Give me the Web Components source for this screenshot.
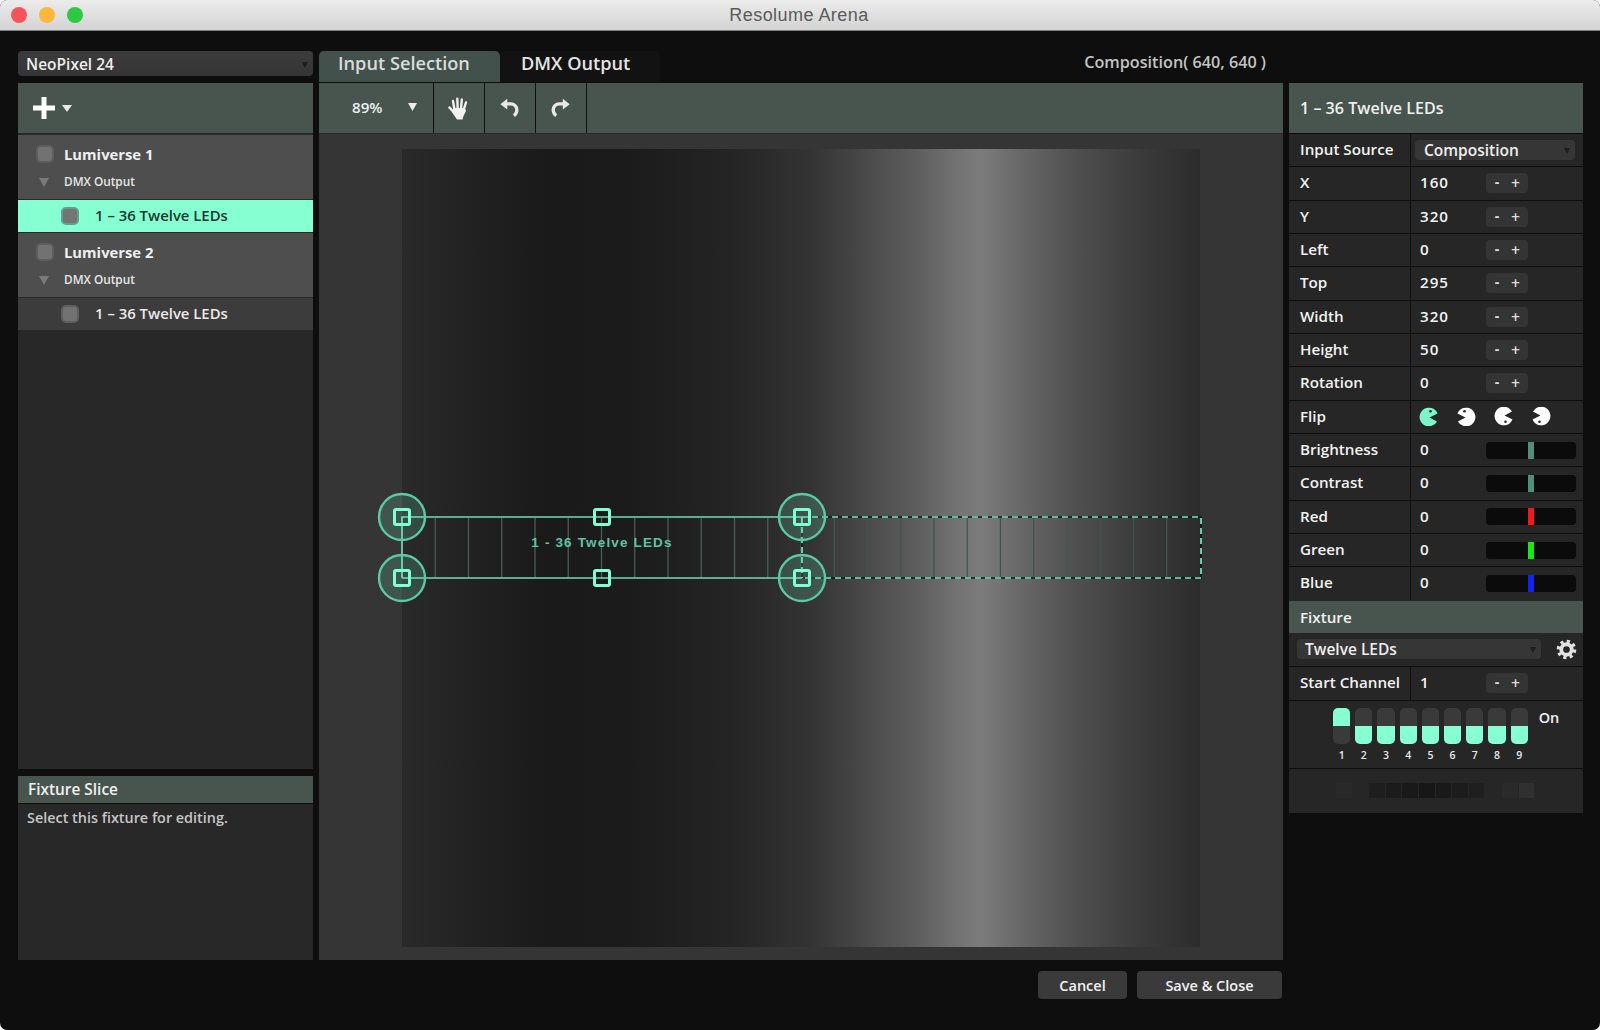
<!DOCTYPE html>
<html>
<head>
<meta charset="utf-8">
<title>Resolume Arena</title>
<style>
    html, body { margin: 0; padding: 0; background: #fff; }
    body { font-family: "Open Sans", "DejaVu Sans", sans-serif; color: #eee; }
</style>
</head>
<body>
<mac-window caption="Resolume Arena">
    <mapper-layout>
        <combo-box slot="top-left" size="big">NeoPixel 24</combo-box>
        <tab-strip slot="top-center" info="Composition( 640, 640 )"></tab-strip>

        <patch-panel slot="left">
            <tree-group name="Lumiverse 1"></tree-group>
            <tree-slice selected>1 – 36 Twelve LEDs</tree-slice>
            <tree-group name="Lumiverse 2"></tree-group>
            <tree-slice>1 – 36 Twelve LEDs</tree-slice>
            <span slot="info-title">Fixture Slice</span>
            <span slot="info-text">Select this fixture for editing.</span>
        </patch-panel>

        <stage-panel slot="center" zoom="89%"></stage-panel>

        <props-panel slot="right" heading="1 – 36 Twelve LEDs">
            <prop-row label="Input Source"><combo-box slot="wide">Composition</combo-box></prop-row>
            <prop-row label="X" value="160"><step-buttons></step-buttons></prop-row>
            <prop-row label="Y" value="320"><step-buttons></step-buttons></prop-row>
            <prop-row label="Left" value="0"><step-buttons></step-buttons></prop-row>
            <prop-row label="Top" value="295"><step-buttons></step-buttons></prop-row>
            <prop-row label="Width" value="320"><step-buttons></step-buttons></prop-row>
            <prop-row label="Height" value="50"><step-buttons></step-buttons></prop-row>
            <prop-row label="Rotation" value="0"><step-buttons></step-buttons></prop-row>
            <prop-row label="Flip"><flip-icons slot="wide"></flip-icons></prop-row>
            <prop-row label="Brightness" value="0"><level-slider color="#4f8f7a"></level-slider></prop-row>
            <prop-row label="Contrast" value="0"><level-slider color="#4f8f7a"></level-slider></prop-row>
            <prop-row label="Red" value="0"><level-slider color="#f01818"></level-slider></prop-row>
            <prop-row label="Green" value="0"><level-slider color="#18e818"></level-slider></prop-row>
            <prop-row label="Blue" value="0"><level-slider color="#1024f0"></level-slider></prop-row>
            <fixture-box slot="fixture"></fixture-box>
        </props-panel>

        <action-button slot="footer" style="width:89px">Cancel</action-button>
        <action-button slot="footer" style="width:145px">Save &amp; Close</action-button>
    </mapper-layout>
</mac-window>

<script>
const FONT = '"Open Sans", "DejaVu Sans", sans-serif';

function shadowFrom(el, html) {
    el.attachShadow({mode: 'open'}).innerHTML = html;
    return el.shadowRoot;
}

class MacWindow extends HTMLElement {
    constructor() {
        super();
        shadowFrom(this, `
<style>
    :host { display: flex; flex-direction: column; width: 1600px; height: 1030px; background: #0e0e0e; border-radius: 7px; overflow: hidden; }
    .bar { flex: none; height: 31px; box-sizing: border-box; position: relative; display: flex; align-items: center; justify-content: center;
        background: linear-gradient(#ececec, #d3d3d3); border-bottom: 1px solid #808080; }
    .lights { position: absolute; left: 11px; top: 7px; display: flex; gap: 12px; }
    .lights i { width: 16px; height: 16px; border-radius: 50%; }
    .caption { font: 18px "Liberation Sans", sans-serif; color: #5a5a5a; letter-spacing: .45px; margin-left: -2px; }
</style>
<div class="bar">
    <div class="lights">
        <i style="background:#f5555a"></i><i style="background:#fdb83a"></i><i style="background:#2ec942"></i>
    </div>
    <div class="caption"></div>
</div>
<slot></slot>`);
    }
    connectedCallback() {
        this.shadowRoot.querySelector('.caption').textContent = this.getAttribute('caption');
    }
}
customElements.define('mac-window', MacWindow);

class MapperLayout extends HTMLElement {
    constructor() {
        super();
        shadowFrom(this, `
<style>
    :host { display: grid; grid-template-columns: 295px 964px 294px; grid-template-rows: 32px 877px auto; column-gap: 6px;
        padding: 20px 0 0 18px; }
    .tl { grid-area: 1 / 1; } .tc { grid-area: 1 / 2; }
    .left { grid-area: 2 / 1; } .center { grid-area: 2 / 2; } .right { grid-area: 2 / 3; }
    .footer { grid-area: 3 / 2; display: flex; justify-content: flex-end; gap: 10px; padding: 11px 1px 0 0; }
</style>
<div class="tl"><slot name="top-left"></slot></div>
<div class="tc"><slot name="top-center"></slot></div>
<div class="left"><slot name="left"></slot></div>
<div class="center"><slot name="center"></slot></div>
<div class="right"><slot name="right"></slot></div>
<div class="footer"><slot name="footer"></slot></div>`);
    }
}
customElements.define('mapper-layout', MapperLayout);

class ComboBox extends HTMLElement {
    constructor() {
        super();
        shadowFrom(this, `
<style>
    :host { display: flex; align-items: center; box-sizing: border-box; height: 20px; padding: 0 5px 0 9px; border-radius: 4px; background: #363636;
        font: 600 15.5px ${FONT}; color: #eee; }
    :host([size="big"]) { height: 25px; padding-left: 8px; background: linear-gradient(#3c3c3c, #353535); }
    span { flex: 1; }
    i { width: 0; height: 0; border: 3.5px solid transparent; border-top: 6px solid #1e1e1e; border-bottom: 0; margin-top: 2px; }
</style>
<span><slot></slot></span><i></i>`);
    }
}
customElements.define('combo-box', ComboBox);

class TabStrip extends HTMLElement {
    constructor() {
        super();
        shadowFrom(this, `
<style>
    :host { display: flex; height: 31px; font: 600 18.2px ${FONT}; }
    .tab { box-sizing: border-box; height: 31px; padding: 0 0 8px 19px; display: flex; align-items: center; border-radius: 5px 5px 0 0; color: #e4e4e4; }
    .on { width: 181px; background: #43514c; color: #d8dcda; }
    .off { width: 160px; padding-left: 21px; background: #121212; }
    .info { margin-left: auto; margin-right: 17px; padding-bottom: 9px; align-self: center; font-size: 16.2px; color: #c4c4c4; }
</style>
<div class="tab on">Input Selection</div>
<div class="tab off">DMX Output</div>
<div class="info"></div>`);
    }
    connectedCallback() {
        this.shadowRoot.querySelector('.info').textContent = this.getAttribute('info');
    }
}
customElements.define('tab-strip', TabStrip);

class PatchPanel extends HTMLElement {
    constructor() {
        super();
        shadowFrom(this, `
<style>
    :host { display: flex; flex-direction: column; height: 877px; }
    .head { flex: none; height: 50px; display: flex; align-items: center; gap: 6px; padding-left: 14px; background: #48554f; }
    .list { flex: 1; background: #282828; }
    .info { flex: none; height: 184px; margin-top: 7px; background: #282828; }
    .title { height: 27px; padding-left: 10px; margin-bottom: 1px; background: #48554f; border-bottom: 1px solid #0e0e0e; font: 600 15.4px/27px ${FONT}; color: #f0f0f0; }
    .text { padding: 3px 9px; font: 600 14.4px ${FONT}; color: #c6c6c6; }
</style>
<div class="head">
    <svg width="24" height="24" viewBox="0 0 24 24"><path d="M9.5 1h5v8.5H23v5h-8.5V23h-5v-8.5H1v-5h8.500z" fill="#fff"/></svg>
    <svg width="10" height="7" viewBox="0 0 10 7"><path d="M0 0h10L5 7z" fill="#e8e8e8"/></svg>
</div>
<div class="list"><slot></slot></div>
<div class="info">
    <div class="title"><slot name="info-title"></slot></div>
    <div class="text"><slot name="info-text"></slot></div>
</div>`);
    }
}
customElements.define('patch-panel', PatchPanel);

const checkBox = `<i class="check"></i>`;
const checkStyle = `.check { flex: none; display: block; box-sizing: border-box; width: 18px; height: 18px; border-radius: 5px; background: #727272; border: 2px solid #5e5e5e; }`;

class TreeGroup extends HTMLElement {
    constructor() {
        super();
        shadowFrom(this, `
<style>
    :host { display: block; height: 64px; margin: 1px 0; background: #4e4e4e; }
    :host(:first-child) { margin-top: 2px; }
    .row { display: flex; align-items: center; height: 36px; padding: 1px 0 0 18px; box-sizing: border-box; gap: 10px; font: 700 14.8px ${FONT}; color: #f0f0f0; }
    .sub { display: flex; align-items: center; height: 16px; margin-top: 2px; padding-left: 21px; gap: 15px; font: 600 11.8px ${FONT}; color: #e6e6e6; }
    .sub i { width: 0; height: 0; border: 5.5px solid transparent; border-top: 9px solid #7a7a7a; border-bottom: 0; margin-top: 3px; }
    ${checkStyle}
</style>
<div class="row">${checkBox}<span></span></div>
<div class="sub"><i></i><span>DMX Output</span></div>`);
    }
    connectedCallback() {
        this.shadowRoot.querySelector('.row span').textContent = this.getAttribute('name');
    }
}
customElements.define('tree-group', TreeGroup);

class TreeSlice extends HTMLElement {
    constructor() {
        super();
        shadowFrom(this, `
<style>
    :host { display: flex; align-items: center; height: 32px; gap: 16px; padding-left: 43px; background: #3c3c3c; font: 600 14.9px ${FONT}; color: #eaeaea; }
    :host([selected]) { background: #86ffd2; color: #16382c; }
    :host([selected]) .check { background: #747474; border-color: #64a08e; }
    span { padding-bottom: 2px; }
    ${checkStyle}
</style>
${checkBox}<span><slot></slot></span>`);
    }
}
customElements.define('tree-slice', TreeSlice);

class StagePanel extends HTMLElement {
    constructor() {
        super();
        shadowFrom(this, `
<style>
    :host { display: flex; flex-direction: column; height: 877px; background: #353535; }
    .tools { flex: none; height: 50px; display: flex; background: #48554f; border-bottom: 1px solid #2a2a2a; }
    .cell { width: 51.3px; box-sizing: border-box; display: flex; align-items: center; justify-content: center; border-right: 1.3px solid #101010; }
    .zoom { width: 114.5px; justify-content: flex-start; padding: 0 0 2px 33px; gap: 25px; font: 600 15.2px ${FONT}; color: #eee; }
    .view { flex: 1; padding-top: 1px; display: flex; align-items: center; justify-content: center; }
</style>
<div class="tools">
    <div class="cell zoom"><span id="zoom"></span><svg width="9" height="8" viewBox="0 0 9 8"><path d="M0 0h9L4.500 8z" fill="#eee"/></svg></div>
    <div class="cell"><svg width="24" height="24" viewBox="0 0 24 24"><g stroke="#f2f2f2" stroke-linecap="round" fill="none">
        <path d="M2.500 11.500L7 16.500" stroke-width="2.500"/>
        <path d="M7.500 14L6 5" stroke-width="2.400"/>
        <path d="M10.700 13L10.300 2.800" stroke-width="2.400"/>
        <path d="M14 13L14.800 3.500" stroke-width="2.400"/>
        <path d="M16.600 14L19 6.500" stroke-width="2.400"/>
    </g><path d="M6.500 12h11.500l1 3-2.500 5-1 3.500H10L5.500 17z" fill="#f2f2f2"/></svg></div>
    <div class="cell"><svg width="22" height="22" viewBox="0 0 24 24"><path d="M8 7.500h5a6.500 6.500 0 0 1 6.500 6.500c0 3-1.200 5-3.200 6.500" fill="none" stroke="#e8e8e8" stroke-width="3.600"/><path d="M1.500 8l7.500-6v11.500z" fill="#e8e8e8"/></svg></div>
    <div class="cell"><svg width="22" height="22" viewBox="0 0 24 24"><g transform="translate(23 0) scale(-1 1)"><path d="M8 7.500h5a6.500 6.500 0 0 1 6.500 6.500c0 3-1.200 5-3.200 6.500" fill="none" stroke="#e8e8e8" stroke-width="3.600"/><path d="M1.500 8l7.500-6v11.500z" fill="#e8e8e8"/></g></svg></div>
</div>
<div class="view"><led-stage></led-stage></div>`);
    }
    connectedCallback() {
        this.shadowRoot.getElementById('zoom').textContent = this.getAttribute('zoom');
    }
}
customElements.define('stage-panel', StagePanel);

// composition preview, the fixture slice sits on it as a free canvas
class LedStage extends HTMLElement {
    constructor() {
        super();
        let lines = '';
        for (let i = 1; i < 24; i++) {
            let x = i * 33.25;
            lines += `<line x1="${x}" x2="${x}" y1="1" y2="61" stroke="${i < 12 ? '#4c5c56' : '#44534e'}" stroke-width="1.300"/>`;
        }
        let handles = '';
        for (let [x, y] of [[0, 0], [0, 61], [400, 0], [400, 61]]) {
            handles += `<circle cx="${x}" cy="${y}" r="23" fill="rgba(110,240,195,.18)" stroke="#5cc9a4" stroke-width="2.400"/>`;
        }
        for (let [x, y] of [[0, 0], [0, 61], [200, 0], [200, 61], [400, 0], [400, 61]]) {
            handles += `<rect x="${x - 7.500}" y="${y - 7.500}" width="15" height="15" rx="1.500" fill="none" stroke="#80ffd3" stroke-width="3"/>`;
        }
        shadowFrom(this, `
<style>
    :host { display: block; position: relative; width: 798px; height: 798px;
        background: linear-gradient(90deg, #2a2a2a 0, #222 8%, #1a1a1a 18%, #1b1b1b 28%, #242424 41%, #333 51%, #444 56.5%, #5c5c5c 64%, #727272 69.5%, #7c7c7c 72.5%, #6a6a6a 77%, #4f4f4f 84.5%, #3c3c3c 92%, #2c2c2c 100%); }
    svg { position: absolute; left: 0; top: 368.5px; overflow: visible; }
    text { font: 700 13.500px "Liberation Sans", sans-serif; letter-spacing: 1.15px; fill: #5cc4a2; }
</style>
<svg width="798" height="62" viewBox="0 0 798 62">
    ${lines}
    <g fill="none" stroke-width="1.700">
        <path d="M400 0H799V61H400M400 0V61" stroke="#141414"/>
        <path d="M400 0H799V61H400M400 0V61" stroke="#72eec5" stroke-dasharray="6 4"/>
        <path d="M0 61V0H400M0 61H400" stroke="#6fdcb8"/>
    </g>
    ${handles}
    <text x="200" y="30" text-anchor="middle">1 - 36 Twelve LEDs</text>
</svg>`);
    }
}
customElements.define('led-stage', LedStage);

class PropsPanel extends HTMLElement {
    constructor() {
        super();
        shadowFrom(this, `
<style>
    :host { display: block; background: #262626; }
    .head { height: 50px; padding-left: 11px; background: #48554f; font: 600 16.1px/50px ${FONT}; color: #f0f0f0; }
</style>
<div class="head"></div>
<slot></slot>
<slot name="fixture"></slot>`);
    }
    connectedCallback() {
        this.shadowRoot.querySelector('.head').textContent = this.getAttribute('heading');
    }
}
customElements.define('props-panel', PropsPanel);

class PropRow extends HTMLElement {
    constructor() {
        super();
        shadowFrom(this, `
<style>
    :host { display: flex; box-sizing: border-box; height: 33.330px; border-top: 1px solid #0e0e0e; background: #262626; font: 600 15.2px ${FONT}; color: #f2f2f2; }
    .label { flex: none; width: 122px; box-sizing: border-box; padding: 0 0 2px 11px; border-right: 1px solid #0e0e0e; display: flex; align-items: center; }
    .value { flex: none; width: 75px; padding: 0 0 2px 9px; box-sizing: border-box; display: flex; align-items: center; letter-spacing: 1px; }
    .rest { display: flex; align-items: center; }
    .wide { flex: 1; display: flex; align-items: center; padding: 0 8px 0 4px; }
    ::slotted([slot="wide"]) { flex: 1; }
</style>
<div class="label"></div>
<div class="value"></div>
<div class="rest"><slot></slot></div>
<div class="wide"><slot name="wide"></slot></div>`);
    }
    connectedCallback() {
        this.shadowRoot.querySelector('.label').textContent = this.getAttribute('label');
        let value = this.shadowRoot.querySelector('.value');
        if (this.hasAttribute('value')) value.textContent = this.getAttribute('value');
        else value.remove();
    }
}
customElements.define('prop-row', PropRow);

class StepButtons extends HTMLElement {
    constructor() {
        super();
        shadowFrom(this, `
<style>
    :host { display: flex; justify-content: center; align-items: center; gap: 11px; box-sizing: border-box; padding-left: 1px; width: 42px; height: 20px; border-radius: 4px; background: #343434; font: 700 12px "DejaVu Sans", sans-serif; color: #ddd; }
</style>
<span>-</span><span>+</span>`);
    }
}
customElements.define('step-buttons', StepButtons);

class LevelSlider extends HTMLElement {
    constructor() {
        super();
        shadowFrom(this, `
<style>
    :host { display: flex; justify-content: center; width: 90px; height: 17px; border-radius: 4px; background: #0b0b0b; }
    i { width: 6px; height: 100%; }
</style>
<i></i>`);
    }
    connectedCallback() {
        this.shadowRoot.querySelector('i').style.background = this.getAttribute('color');
    }
}
customElements.define('level-slider', LevelSlider);

class FlipIcons extends HTMLElement {
    constructor() {
        super();
        const pac = (fill, eye, t) => `<svg width="19" height="19" viewBox="0 0 19 19"><g transform="${t}"><path d="M18.500 6.500L10.500 10.500l7.500 4A9.300 9.300 0 1 1 18.500 6.500z" fill="${fill}"/><circle cx="11.500" cy="4.300" r="1.300" fill="${eye}"/></g></svg>`;
        shadowFrom(this, `
<style>
    :host { display: flex; gap: 18.700px; padding-left: 4px; }
    svg { display: block; }
</style>
${pac('#7cf5cb', '#262626', '')}
${pac('#fff', '#262626', 'translate(19 0) scale(-1 1)')}
${pac('#fff', '#262626', 'translate(0 19) scale(1 -1)')}
${pac('#fff', '#262626', 'translate(19 19) scale(-1 -1)')}`);
    }
}
customElements.define('flip-icons', FlipIcons);

class DipSwitch extends HTMLElement {
    constructor() {
        super();
        shadowFrom(this, `
<style>
    :host { display: block; width: 17.300px; text-align: center; font: 600 10.500px ${FONT}; color: #e8e8e8; }
    .track { height: 36px; border-radius: 5px; overflow: hidden; background: #3a3a3a; display: flex; flex-direction: column; justify-content: flex-end; margin-bottom: 4px; }
    :host([up]) .track { justify-content: flex-start; }
    .knob { height: 18px; background: #86ffd2; }
</style>
<div class="track"><div class="knob"></div></div><div class="n"></div>`);
    }
    connectedCallback() {
        this.shadowRoot.querySelector('.n').textContent = this.getAttribute('n');
    }
}
customElements.define('dip-switch', DipSwitch);

class FixtureBox extends HTMLElement {
    constructor() {
        super();
        let dips = '';
        for (let i = 1; i <= 9; i++) dips += `<dip-switch n="${i}" ${i == 1 ? 'up' : ''}></dip-switch>`;
        const tones = ['#292929', '', '#1e1e1e', '#1b1b1b', '#191919', '#171717', '#191919', '#1c1c1c', '#1f1f1f', '', '#2a2a2a', '#303030'];
        let cells = tones.map(c => `<i style="background:${c || 'transparent'}"></i>`).join('');
        shadowFrom(this, `
<style>
    :host { display: block; background: #262626; font: 600 15.2px ${FONT}; color: #f2f2f2; }
    .head { height: 32px; margin-top: 1px; padding-left: 11px; background: #48554f; font: 600 15.2px/32px ${FONT}; }
    .pick { height: 33px; display: flex; align-items: center; gap: 15px; padding: 0 6px 0 8px; box-sizing: border-box; }
    .pick combo-box { flex: 1; padding-left: 8px; }
    .start { box-sizing: border-box; height: 34px; display: flex; border-top: 1px solid #0e0e0e; }
    .start .label { width: 122px; box-sizing: border-box; padding: 0 0 2px 11px; display: flex; align-items: center; border-right: 1px solid #0e0e0e; }
    .start .value { width: 75px; padding: 0 0 2px 9px; box-sizing: border-box; display: flex; align-items: center; }
    .start step-buttons { align-self: center; }
    .dips { box-sizing: border-box; height: 68px; display: flex; gap: 4.900px; padding: 7px 0 0 44px; border-top: 1px solid #0e0e0e; }
    .on { margin-left: 6px; font-size: 14.5px; line-height: 20px; }
    .cells { box-sizing: border-box; height: 45px; display: flex; gap: 1px; padding: 14px 0 0 47px; border-top: 1px solid #0e0e0e; }
    .cells i { width: 15.600px; height: 15px; }
</style>
<div class="head">Fixture</div>
<div class="pick">
    <combo-box>Twelve LEDs</combo-box>
    <svg width="21" height="21" viewBox="0 0 22 22"><g fill="none" stroke="#e2e2e2"><circle cx="11" cy="11" r="8.500" stroke-width="3.500" stroke-dasharray="3.300 3.370"/><circle cx="11" cy="11" r="5.500" stroke-width="4"/></g></svg>
</div>
<div class="start">
    <div class="label">Start Channel</div><div class="value">1</div><step-buttons></step-buttons>
</div>
<div class="dips">${dips}<div class="on">On</div></div>
<div class="cells">${cells}</div>`);
    }
}
customElements.define('fixture-box', FixtureBox);

class ActionButton extends HTMLElement {
    constructor() {
        super();
        shadowFrom(this, `
<style>
    :host { display: flex; align-items: center; justify-content: center; height: 28px; border-radius: 4px; background: #3a3a3a; font: 600 14.5px ${FONT}; color: #f2f2f2; }
</style>
<slot></slot>`);
    }
}
customElements.define('action-button', ActionButton);
</script>
</body>
</html>
